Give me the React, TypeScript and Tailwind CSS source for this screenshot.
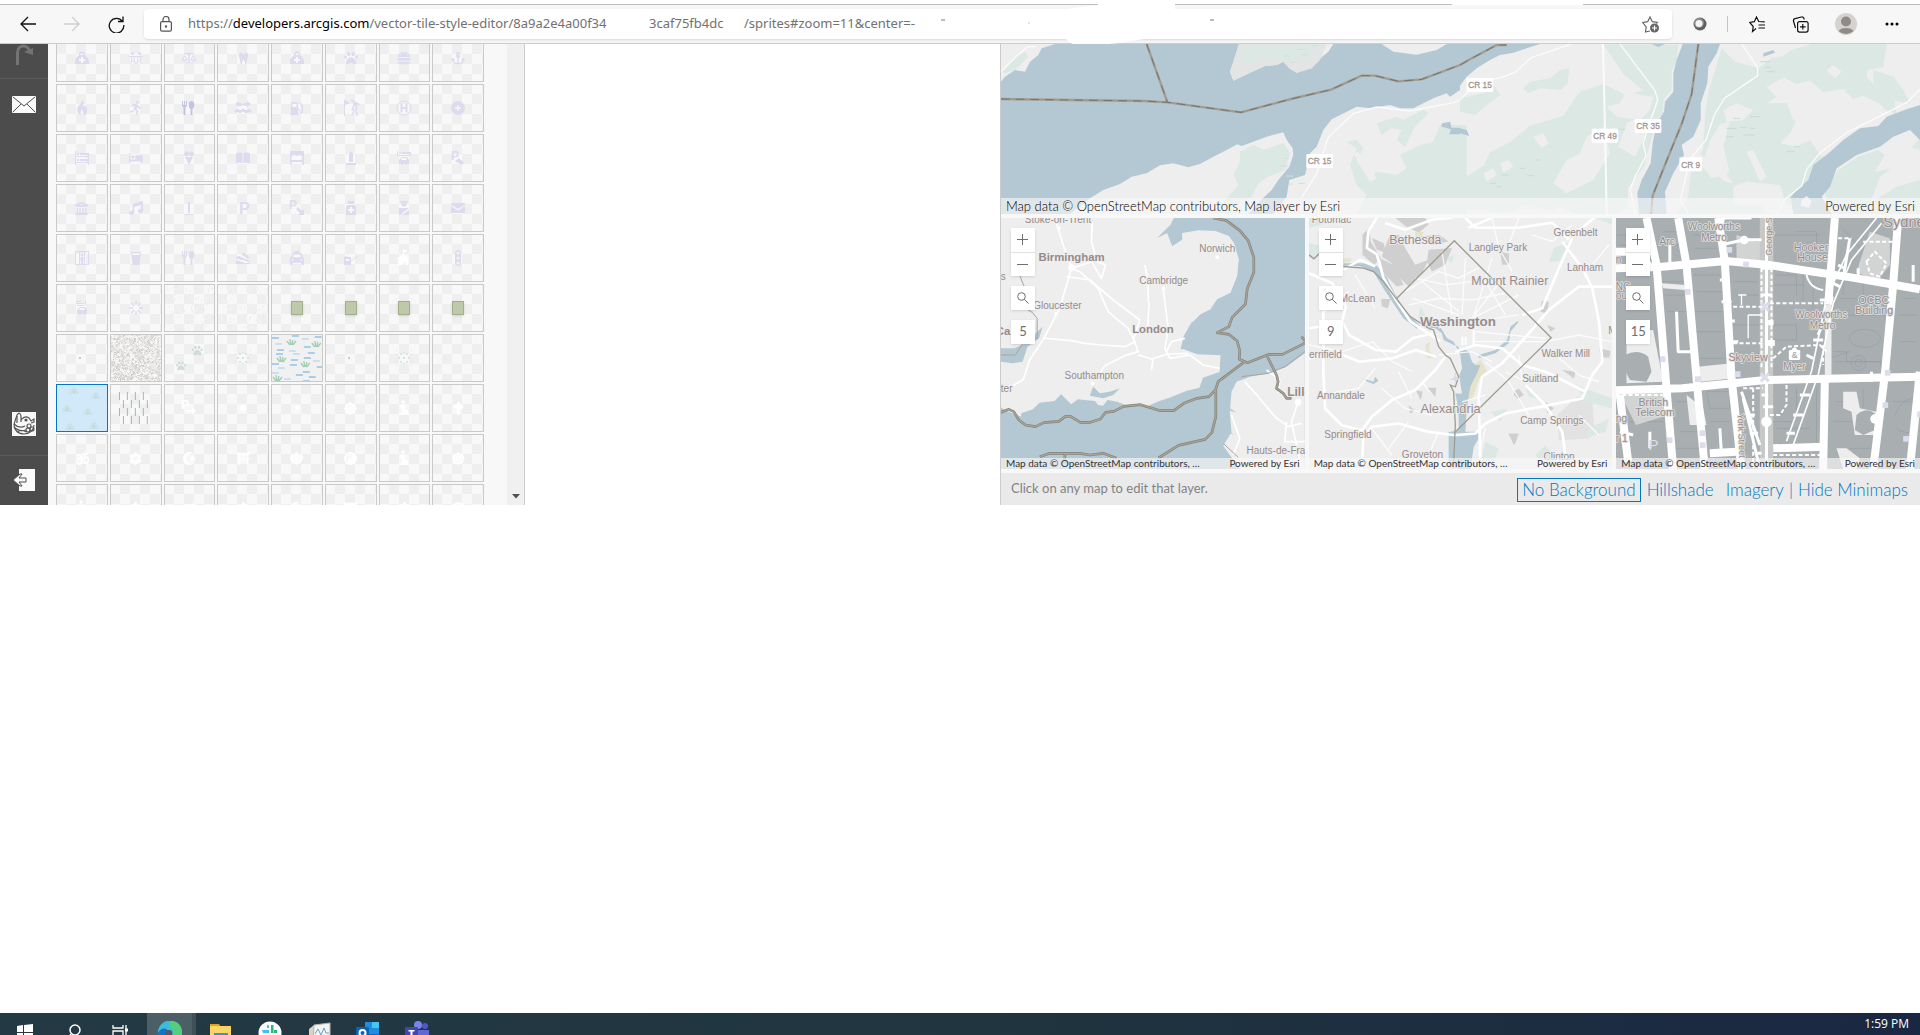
import type { ReactNode } from "react";
import {
  FaAnchor,
  FaBed,
  FaBookOpen,
  FaBuildingColumns,
  FaBurger,
  FaCirclePlus,
  FaCross,
  FaDharmachakra,
  FaFire,
  FaGasPump,
  FaKhanda,
  FaMusic,
  FaOm,
  FaPaw,
  FaPersonRunning,
  FaScaleBalanced,
  FaStarAndCrescent,
  FaStarOfDavid,
  FaTaxi,
  FaTooth,
  FaToriiGate,
  FaYinYang,
} from "react-icons/fa6";

// Small deterministic generator so the texture swatches stay the same between renders
const makeRandom = (seed: number) => {
  let s = seed;
  return () => {
    s = (s * 16807) % 2147483647;
    return s / 2147483647;
  };
};

const Glyph = ({ children }: { children: ReactNode }) => (
  <svg viewBox="0 0 14 14" className="h-[14px] w-[14px] overflow-visible" fill="currentColor">
    {children}
  </svg>
);

const Letter = ({ size = 15, x = 3, y = 12 }: { size?: number; x?: number; y?: number }) => (
  <text x={x} y={y} fontSize={size} fontWeight="700" fontFamily="Liberation Sans, sans-serif">
    P
  </text>
);

const MedKit = () => (
  <Glyph>
    <path
      fillRule="evenodd"
      d="M4 4V3.500a3 3 0 0 1 6 0V4l3 3 1 3v3H0v-3l1-3zM5.500 4h3V3.500a1.500 1.500 0 0 0-3 0zM6 6v2H4v2h2v2h2v-2h2V8H8V6z"
    />
  </Glyph>
);

const Seesaw = () => (
  <Glyph>
    <circle cx="3.500" cy="2.500" r="1.500" />
    <circle cx="10.500" cy="2.500" r="1.500" />
    <path d="M0 5h14v1H0z" />
    <path d="M3 5 2 13M5 6l1 7M11 5l1 8M9 6l-1 7M3 9l4 4M11 9l-4 4" stroke="currentColor" fill="none" />
  </Glyph>
);

const Flame = () => (
  <Glyph>
    <path
      fillRule="evenodd"
      d="M7-1q3 2 1 6 1 1 2-1 3 4 2 7-1 3-4 3 1-3-1-6-2 3-1 6-4-1-4-5 0-3 3-6 2-2 2-4z"
    />
  </Glyph>
);

const Swim = () => (
  <Glyph>
    <path d="m-1 3 4-3v2h2l2 1 2-1h2V0l4 3-4 3V5H9L7 4 5 5H3v1z" />
    <path d="m-1 11 2.500-2L4 11l3-2 3 2 2.500-2 2.500 2" stroke="currentColor" strokeWidth="2.500" fill="none" />
  </Glyph>
);

const Golf = () => (
  <Glyph>
    <path d="M0-1h1v16H0zM1-1l5 3-5 2z" />
    <path d="m7-1 7 4-5 0M10 4l-2 5M12 4v5l1 6M9 8l1 2-2 4" stroke="currentColor" strokeWidth="1.500" fill="none" />
    <circle cx="11" cy="3" r="1.500" />
  </Glyph>
);

const Heliport = () => (
  <Glyph>
    <circle cx="7" cy="7" r="7" fill="none" stroke="currentColor" />
    <path d="M3.500 2.500h2v3.500h3V2.500h2v9h-2V8h-3v3.500h-2z" />
  </Glyph>
);

const Fork = () => (
  <Glyph>
    <path d="M0 0h1v4h1V0h1v4h1V0h1v5L3.500 6.500V14h-2V6.500L0 5z" />
    <ellipse cx="9.500" cy="4" rx="2.800" ry="4" />
    <path d="M8.500 7h2v7h-2z" />
  </Glyph>
);

const Bunk = () => (
  <Glyph>
    <path d="M0 0h1v14H0zM13 2h1v12h-1zM0 5h14v1H0zM0 11h14v1H0zM5 2h8v2H5zM5 8h8v2H5z" />
    <circle cx="3" cy="3" r="1.300" />
    <circle cx="3" cy="9" r="1.300" />
  </Glyph>
);

const Cone = () => (
  <Glyph>
    <circle cx="4.500" cy="3" r="2.500" />
    <circle cx="9.500" cy="3" r="2.500" />
    <path d="M3 6h8L7 14z" />
  </Glyph>
);

const Stall = () => (
  <Glyph>
    <path d="M0 0h14v4l-2 1-2-1-3 1-3-1-2 1-2-1z" />
    <path d="M0 4h1.500v10H0zM12.500 4H14v10h-1.500zM0 9h14v2H0z" />
  </Glyph>
);

const Obelisk = ({ thin }: { thin?: boolean }) => (
  <Glyph>
    {thin ? <path d="M6 2l1-2 1 2v10H6zM3 13h8v1H3z" /> : <path d="M5 3l2-3 2 3v8H5zM2 12h10v2H2z" />}
  </Glyph>
);

const Car = ({ top }: { top: ReactNode }) => (
  <Glyph>
    {top}
    <path d="m4 7 1-1h5l1 1 1 2v4h-2v1H9v-1H6v1H4v-1H2V9zM5 7 4 9h6L9 7z" fillRule="evenodd" />
  </Glyph>
);

const Bottle = () => (
  <Glyph>
    <path fillRule="evenodd" d="M4 0h6v3H4zM3 4h8l1 2v8H2V6zM6 6v2H4v2h2v2h2v-2h2V8H8V6z" />
  </Glyph>
);

const Police = () => (
  <Glyph>
    <path d="M3 0h8l-1 2H4zM4 2.500h6c0 4-6 4-6 0zM2 7h10L3 14H2zM12 9v5H5z" />
  </Glyph>
);

const Mail = () => (
  <Glyph>
    <path d="M0 2h14v1.500L7 8 0 3.500zM0 5l7 4.500L14 5v7H0z" />
  </Glyph>
);

const Elevator = () => (
  <Glyph>
    <path fillRule="evenodd" d="M0 0h14v14H0zM1 1v12h3V1zM5 1v12h4V1zM10 1v12h3V1z" />
    <circle cx="7" cy="4" r="1.500" />
    <path d="M5.500 6h3v4H8v3H6v-3h-.500z" />
  </Glyph>
);

const Cup = () => (
  <Glyph>
    <path fillRule="evenodd" d="M2 1h10l-1.500 13h-7zM3 2l.200 2h7.600l.200-2z" />
  </Glyph>
);

const Shoe = () => (
  <Glyph>
    <path d="m0 6 3-1 11 5v1L0 7.500zM0 9l9 3h5v1H0zM5 3l3-1 1 1 4 2-1 3z" />
  </Glyph>
);

const Watering = () => (
  <Glyph>
    <path fillRule="evenodd" d="M0 6h7v8H0zM1.500 8v2h4V8z" />
    <path d="m7 10 5-4 2 0M0 6h3" stroke="currentColor" fill="none" />
  </Glyph>
);

const School = () => (
  <Glyph>
    <path d="M6-1h4v2H7v3l5 3v1h-1v6H9v-3H6v3H1V8H0V7l6-3z" />
  </Glyph>
);

const Lights = () => (
  <Glyph>
    <rect x="4" y="-1" width="6" height="16" rx="3" />
    <g fill="#f3f3f6">
      <circle cx="7" cy="2" r="1.600" />
      <circle cx="7" cy="7" r="1.600" />
      <circle cx="7" cy="12" r="1.600" />
    </g>
  </Glyph>
);

const Burst = () => (
  <Glyph>
    <path d="M7 0v4M7 10v4M0 7h4M10 7h4M2.500 2l2.500 3M11.500 2 9 5M2.500 12 5 9M11.500 12 9 9" stroke="currentColor" strokeWidth="1.500" />
  </Glyph>
);

const GreenSquare = () => <span className="h-[14px] w-[12px] border border-[#a3af8a] bg-[#bec8aa] shadow-sm" />;

const Kneel = () => (
  <Glyph>
    <circle cx="6" cy="1" r="1.700" />
    <path d="M4 4h4v5h3v3h1v2H2v-2h3V7L2 6z" />
  </Glyph>
);

const DotRing = () => (
  <svg viewBox="0 0 16 16" className="h-4 w-4 text-[#d9e5e0]" fill="currentColor">
    <path d="M4 3h2v2H4zM10 3h2v2h-2zM7 7h2v2H7zM2 7h2v2H2zM12 7h2v2h-2zM4 11h2v2H4zM10 11h2v2h-2zM7 13h2v1H7zM7 2h2v1H7zM0 0h1v1H0zM15 0h1v1h-1zM0 15h1v1H0zM15 15h1v1h-1zM0 4h1v1H0zM15 4h1v1h-1zM0 11h1v1H0zM15 11h1v1h-1z" />
  </svg>
);

const Texture = ({ seed, count, colors, long }: { seed: number; count: number; colors: string[]; long?: boolean }) => {
  const random = makeRandom(seed);
  const marks = Array.from({ length: count }, (_, i) => {
    const x = Math.floor(random() * 50);
    const y = Math.floor(random() * 46);
    const dx = long ? Math.floor(random() * 5) - 2 : 1;
    const dy = long ? Math.floor(random() * 5) - 2 : 0;
    return <path key={i} d={`M${x} ${y}l${dx} ${dy}`} stroke={colors[i % colors.length]} />;
  });
  return (
    <svg viewBox="0 0 50 46" className="h-full w-full" preserveAspectRatio="none">
      {marks}
    </svg>
  );
};

const Marsh = () => {
  const reeds = [[15, 10], [40, 12], [5, 27], [29, 32], [1, 46]];
  const water = [
    [20, 1], [30, 4], [43, 2], [0, 3], [3, 9], [32, 12], [5, 15], [17, 16], [36, 18], [4, 19], [21, 19],
    [32, 23], [19, 25], [41, 26], [0, 29], [18, 30], [6, 33], [45, 32], [31, 37], [0, 38], [24, 40], [37, 42], [12, 44], [31, 46],
  ];
  return (
    <svg viewBox="0 0 50 46" className="h-full w-full bg-[#f1f1f1]" preserveAspectRatio="none">
      {water.map(([x, y], i) => (
        <path key={i} d={`M${x} ${y}h7`} stroke={i % 3 === 1 ? "#a9cdea" : "#63aae0"} />
      ))}
      {reeds.map(([x, y]) => (
        <path key={x} d={`M${x} ${y - 4}l3 4M${x + 3} ${y - 6}l1 6M${x + 6} ${y - 5}l-1 5M${x + 9} ${y - 4}l-3 4`} stroke="#a4cdb5" strokeWidth="1.400" />
      ))}
    </svg>
  );
};

const Tufts = () => (
  <svg viewBox="0 0 50 46" className="h-full w-full" preserveAspectRatio="none" fill="none" stroke="#c2d8d6" strokeWidth=".8">
    {[[17, 8], [39, 13], [10, 26], [31, 29], [13, 44], [37, 43]].map(([x, y]) => (
      <path key={x} d={`M${x - 5} ${y}h10M${x - 4} ${y - 3}l4 3 4-3M${x - 2} ${y - 5}l2 5 2-5M${x} ${y - 6}v6`} />
    ))}
  </svg>
);

const Rushes = () => (
  <svg viewBox="0 0 50 46" className="h-full w-full" preserveAspectRatio="none" stroke="#9cbdb0">
    {[7, 15, 23, 31].map((y, row) =>
      [8, 16, 24, 32].map((x) => <path key={`${x}-${y}`} d={`M${x + (row % 2) * 4 + 0.5} ${y}v8`} />)
    )}
  </svg>
);

const Paws = () => (
  <svg viewBox="0 0 50 46" className="h-full w-full text-[#d0dcd8]">
    <FaPaw x="27" y="10" size={11} />
    <FaPaw x="11" y="26" size={10} />
  </svg>
);

const Speck = () => <span className="mr-1 h-[2px] w-[2px] bg-[#b5d2c6]" />;

const bedTop = (
  <g>
    <path d="M0 0h1v5H0zM13 1h1v4h-1zM0 4h14v1H0zM5 1h8v2H5z" />
    <circle cx="3" cy="2" r="1" />
  </g>
);

type Sprite = { name: string; art?: ReactNode; tone?: "dark" | "white" };

const sprites: Sprite[] = [
  { name: "hospital bag", art: <MedKit /> },
  { name: "playground", art: <Seesaw /> },
  { name: "courthouse", art: <FaScaleBalanced size={14} /> },
  { name: "dentist", art: <FaTooth size={13} /> },
  { name: "doctor", art: <MedKit /> },
  { name: "veterinary", art: <FaPaw size={14} /> },
  { name: "fast food", art: <FaBurger size={14} /> },
  { name: "harbor", art: <FaAnchor size={14} /> },
  { name: "fire station", art: <Flame /> },
  { name: "running", art: <FaPersonRunning size={14} /> },
  { name: "restaurant", art: <Fork />, tone: "dark" },
  { name: "swimming", art: <Swim /> },
  { name: "fuel", art: <FaGasPump size={13} /> },
  { name: "golf", art: <Golf /> },
  { name: "heliport", art: <Heliport /> },
  { name: "hospital", art: <FaCirclePlus size={14} /> },
  { name: "hostel", art: <Bunk /> },
  { name: "hotel", art: <FaBed size={14} /> },
  { name: "ice cream", art: <Cone /> },
  { name: "library", art: <FaBookOpen size={14} /> },
  { name: "market", art: <Stall /> },
  { name: "monument", art: <Obelisk /> },
  { name: "motel", art: <Car top={bedTop} /> },
  { name: "parking ride", art: <Glyph><Letter size={12} x={0} y={9} /><path d="m4 10 4-3 5 5-2 2z" /></Glyph> },
  { name: "museum", art: <FaBuildingColumns size={13} /> },
  { name: "music", art: <FaMusic size={14} /> },
  { name: "obelisk", art: <Obelisk thin /> },
  { name: "parking", art: <Glyph><Letter size={16} y={13} /></Glyph> },
  { name: "parking exit", art: <Glyph><Letter size={12} x={-1} y={8} /><path d="M8 6l4 4 2-2v6H8l2-2-4-4z" /></Glyph> },
  { name: "pharmacy", art: <Bottle /> },
  { name: "police", art: <Police /> },
  { name: "post office", art: <Mail /> },
  { name: "elevator", art: <Elevator /> },
  { name: "cafe", art: <Cup /> },
  { name: "food court", art: <Fork /> },
  { name: "shoes", art: <Shoe /> },
  { name: "taxi", art: <FaTaxi size={14} /> },
  { name: "garden center", art: <Watering /> },
  { name: "school", art: <School />, tone: "white" },
  { name: "traffic signal", art: <Lights /> },
  { name: "car wash", art: <Car top={<path d="M1 0h5v1H1zM1 2h8v1H1zM2 4h7v1H2zM10 0h1v4h-1z" />} /> },
  { name: "fireworks", art: <Burst /> },
  { name: "dots", art: <Texture seed={17} count={230} colors={["#e3e3ee", "#ededf2", "#fafafa"]} /> },
  { name: "light dots", art: <Texture seed={71} count={230} colors={["#e9e9eb", "#fafafa"]} /> },
  { name: "park 1", art: <GreenSquare /> },
  { name: "park 2", art: <GreenSquare /> },
  { name: "park 3", art: <GreenSquare /> },
  { name: "park 4", art: <GreenSquare /> },
  { name: "dot", art: <Speck /> },
  { name: "scrub", art: <Texture seed={29} count={1300} colors={["#dedbd8", "#c9c7c3", "#f4f4f3", "#dddad6"]} long /> },
  { name: "paws", art: <Paws /> },
  { name: "dot ring", art: <DotRing /> },
  { name: "marsh", art: <Marsh /> },
  { name: "small dot", art: <Speck /> },
  { name: "dot ring 2", art: <DotRing /> },
  { name: "grain", art: <Texture seed={43} count={80} colors={["#f1f1f1", "#fafafa"]} /> },
  { name: "tufts", art: <Tufts /> },
  { name: "rushes", art: <Rushes /> },
  { name: "parking right", art: <Glyph><Letter size={12} x={-1} y={8} /><path d="M4 9h6V6l4 4-4 4v-3H4z" /></Glyph>, tone: "white" },
  { name: "large circle", art: <Glyph><circle cx="7" cy="7" r="3" /></Glyph>, tone: "white" },
  { name: "small circle", art: <Glyph><circle cx="7" cy="7" r="2" /></Glyph>, tone: "white" },
  { name: "buddhist", art: <FaDharmachakra size={13} />, tone: "white" },
  { name: "shrine", art: <Kneel />, tone: "white" },
  { name: "church", art: <FaCross size={13} />, tone: "white" },
  { name: "hindu", art: <FaOm size={14} />, tone: "white" },
  { name: "jewish", art: <FaStarOfDavid size={13} />, tone: "white" },
  { name: "muslim", art: <FaStarAndCrescent size={13} />, tone: "white" },
  { name: "shinto", art: <FaToriiGate size={13} />, tone: "white" },
  { name: "sikh", art: <FaKhanda size={13} />, tone: "white" },
  { name: "taoist", art: <FaYinYang size={13} />, tone: "white" },
  { name: "confucian", art: <Kneel />, tone: "white" },
  { name: "wheel", art: <FaDharmachakra size={13} />, tone: "white" },
  { name: "shrine 2", art: <Kneel />, tone: "white" },
  { name: "church 2", art: <FaCross size={13} />, tone: "white" },
  { name: "hindu 2", art: <FaOm size={13} />, tone: "white" },
  { name: "jewish 2", art: <FaStarOfDavid size={13} />, tone: "white" },
  { name: "muslim 2", art: <FaStarAndCrescent size={13} />, tone: "white" },
  { name: "shinto 2", art: <FaToriiGate size={13} />, tone: "white" },
  { name: "sikh 2", art: <FaKhanda size={13} />, tone: "white" },
  { name: "taoist 2", art: <FaYinYang size={13} />, tone: "white" },
];

const tones = {
  normal: "text-[#dcdcee]",
  dark: "text-[#c3c3e3]",
  white: "text-white",
};

const SpriteCell = ({ sprite }: { sprite: Sprite }) => {
  const selected = sprite.name === "tufts";
  return (
    <button
      aria-label={sprite.name}
      className={`flex h-12 items-center justify-center overflow-hidden border ${tones[sprite.tone ?? "normal"]} ${
        selected
          ? "border-[#0079c1] bg-[#d2e9f9]"
          : "border-[#cacaca] bg-[repeating-conic-gradient(#efefef_0_25%,#f8f8f8_0_50%)] bg-[length:20px_20px] bg-[position:-1px_-1px]"
      }`}
    >
      {sprite.art}
    </button>
  );
};

const BrowserBar = () => (
  <header className="relative flex h-11 flex-col border-b border-[#cccccc] bg-[#f7f7f7]">
    <div className="flex h-[5px] shrink-0 bg-white">
      <div className="w-[1098px] border-b border-[#bdbdbd]" />
      <div className="w-[76px]" />
      <div className="w-[278px] border-b border-[#bdbdbd]" />
      <div className="w-[131px]" />
      <div className="grow border-b border-[#bdbdbd]" />
    </div>
    <div className="flex grow items-center pr-[21px] text-[#101010]">
      <button aria-label="Back" className="ml-5">
        <svg width="16" height="16" viewBox="0 0 16 16" fill="none" stroke="currentColor" strokeWidth="1.300">
          <path d="M16 8H1M8 1 1 8l7 7" />
        </svg>
      </button>
      <button aria-label="Forward" className="ml-7 text-[#cfcfcf]">
        <svg width="16" height="16" viewBox="0 0 16 16" fill="none" stroke="currentColor" strokeWidth="1.300">
          <path d="M0 8h15M8 1l7 7-7 7" />
        </svg>
      </button>
      <button aria-label="Refresh" className="ml-7">
        <svg width="17" height="17" viewBox="0 0 17 17" fill="none" stroke="currentColor" strokeWidth="1.300">
          <path d="M14.500 5.500A7.300 7.300 0 1 0 15.800 9M15 .500v5h-5" />
        </svg>
      </button>
      <div className="ml-[19px] flex h-[30px] min-w-0 grow items-center rounded bg-white pr-3 pl-4 font-['Noto_Sans','Open_Sans',sans-serif] text-[13px] text-[#717171] shadow-sm">
        <svg width="12" height="16" viewBox="0 0 12 16" fill="none" stroke="#555" strokeWidth="1.200">
          <rect x=".6" y="5.600" width="10.800" height="9.600" rx="1.500" />
          <path d="M3 5.500V3.500a3 3 0 0 1 6 0v2" />
          <circle cx="6" cy="10.500" r=".6" fill="#555" />
        </svg>
        <div className="ml-4 flex w-[860px] shrink-0 whitespace-nowrap">
          <span className="w-[461px]">
            https://<span className="text-black">developers.arcgis.com</span>/vector-tile-style-editor/8a9a2e4a00f34
          </span>
          <span className="w-[95px]">3caf75fb4dc</span>
          <span className="w-[198px]">/sprites#zoom=11&amp;center=-</span>
        </div>
        <button aria-label="Add to favorites" className="ml-auto">
          <svg width="18" height="17" viewBox="0 0 18 17" fill="none" stroke="#666" strokeWidth="1.200">
            <path d="M8 15 3.500 16l.700-5L.700 6.500l5-.800L8 1l2.300 4.700 5 .800-1 1" />
            <circle cx="12.500" cy="12" r="4.500" fill="#666" stroke="none" />
            <path d="M12.500 9.500v5M10 12h5" stroke="#fff" />
          </svg>
        </button>
      </div>
      <button aria-label="Extension" className="ml-[21px]">
        <svg width="14" height="14" viewBox="0 0 14 14">
          <circle cx="7" cy="7" r="6.500" fill="#5f5f5f" />
          <circle cx="6" cy="6" r="5" fill="#8e8e8e" />
          <circle cx="6" cy="6.500" r="3.500" fill="#f4f4f4" />
        </svg>
      </button>
      <div className="ml-5 h-4 w-px bg-[#c4c4c4]" />
      <button aria-label="Favorites" className="ml-[21px]">
        <svg width="17" height="17" viewBox="0 0 17 17" fill="none" stroke="currentColor" strokeWidth="1.200">
          <path d="m7 12.500-3.500 3 .700-5L.700 6.500l4.600-.800L7.500 1l2.200 4.500 6 .300M9.500 9H16M9.500 12H16" />
        </svg>
      </button>
      <button aria-label="Collections" className="ml-[26px]">
        <svg width="17" height="17" viewBox="0 0 17 17" fill="none" stroke="currentColor" strokeWidth="1.200">
          <rect x="5.600" y="5.600" width="10.500" height="10.500" rx="2" />
          <path d="M10.800 8v5.600M8 10.800h5.600M3.500 12 1.500 5A2 2 0 0 1 3 2.700L9.500 1A2 2 0 0 1 12 2.500l.3 1" />
        </svg>
      </button>
      <button aria-label="Profile" className="ml-[26px]">
        <svg width="22" height="22" viewBox="0 0 22 22">
          <circle cx="11" cy="11" r="11" fill="#d5d3d0" />
          <circle cx="11" cy="8.500" r="5" fill="#918b86" />
          <path d="M3.500 18a8 4.500 0 0 1 15 0A11 11 0 0 1 3.500 18z" fill="#918b86" />
        </svg>
      </button>
      <button aria-label="Settings and more" className="ml-7">
        <svg width="14" height="4" viewBox="0 0 14 4">
          <circle cx="2" cy="2" r="1.500" />
          <circle cx="7" cy="2" r="1.500" />
          <circle cx="12" cy="2" r="1.500" />
        </svg>
      </button>
    </div>
    <svg className="absolute top-0 left-[930px] h-[46px] w-[300px]" viewBox="930 0 300 46" aria-hidden="true">
      <path d="M1058 10 1098 5V2h77v7l-60 3zM1065 38h85l-30 5-35 3q-16-1-20-8z" fill="#fff" />
      <path d="M941 20h4M1210 20h4" stroke="#777" />
      <path d="M1029 22v2" stroke="#ccc" />
    </svg>
  </header>
);

const SideRail = () => (
  <nav className="flex w-12 shrink-0 flex-col items-center bg-[#4c4c4c]">
    <button aria-label="Redo" className="h-[35px] w-full border-b border-[#5c5c5c] pl-4">
      <svg width="18" height="34" viewBox="0 0 18 34" fill="none">
        <path d="M1.500 21V9c0-5 3-7 6-7s5 2 6 5" stroke="#747474" strokeWidth="3" />
        <path d="m8 8 9-4v7z" fill="#747474" />
      </svg>
    </button>
    <button aria-label="Feedback" className="mt-[17px]">
      <svg width="24" height="17" viewBox="0 0 24 17">
        <rect width="24" height="17" rx="1" fill="#fafafa" />
        <path d="m1 1 11 9 11-9M1 16l8-8M23 16l-8-8" stroke="#4c4c4c" fill="none" />
      </svg>
    </button>
    <button aria-label="Sprites" className="mt-auto">
      <svg width="24" height="24" viewBox="0 0 24 24" fill="none" stroke="#555" strokeWidth="1.200">
        <rect width="24" height="24" fill="#f8f8f8" stroke="none" />
        <path d="M3 9c-3 8 3 13 9 13s10-4 10-9M3 9l2-6q3-4 4 1v6M9 8q4-5 8-2l2 3 3-2v3l-3 1" />
        <path d="M2 12q5 5 11 2M2 15q5 5 12 3M5 20q5-3 9 0M5 4v7" />
        <circle cx="14" cy="8" r="1" fill="#444" />
        <circle cx="17" cy="14" r="2" />
        <circle cx="20" cy="17" r="2" />
        <circle cx="16" cy="18" r="2" />
      </svg>
    </button>
    <div className="mt-[19px] w-full border-t border-[#5c5c5c]" />
    <button aria-label="Exit" className="mt-[13px] mb-[14px]">
      <svg width="22" height="22" viewBox="0 0 22 22">
        <path d="M6 0h16v22H6z" fill="#fafafa" />
        <path d="m0 11 7-6h2L6 9h7v4H6l3 4H7z" fill="#fafafa" stroke="#4c4c4c" strokeWidth="1" />
      </svg>
    </button>
  </nav>
);

const SpritePanel = () => (
  <section className="flex w-[477px] shrink-0 border-r border-[#cccccc] bg-[#f8f8f8]">
    <div className="h-full grow overflow-hidden pl-2">
      <div className="-mt-[10px] grid w-[428px] grid-cols-8 gap-0.5">
        {sprites.map((sprite) => (
          <SpriteCell key={sprite.name} sprite={sprite} />
        ))}
      </div>
    </div>
    <div className="flex w-[17px] items-end justify-center bg-[#f0f0f0] pb-1.5">
      <svg width="8" height="5" viewBox="0 0 8 5">
        <path d="M0 0h8L4 4.500z" fill="#505050" />
      </svg>
    </div>
  </section>
);

type Label = { text: string; x: number; y: number; size: number; bold?: boolean; turn?: number };

const MapLabels = ({ labels, halo = "#eeeeee" }: { labels: Label[]; halo?: string }) => (
  <g fill="#968b8a" stroke={halo} strokeWidth="5" strokeLinejoin="round" paintOrder="stroke" fontFamily="Liberation Sans, Arial, sans-serif">
    {labels.map((l, i) => (
      <text
        key={i}
        x={l.x}
        y={l.y}
        fontSize={l.size}
        fontWeight={l.bold ? 700 : 400}
        transform={l.turn ? `rotate(${l.turn} ${l.x} ${l.y})` : undefined}
      >
        {l.text}
      </text>
    ))}
  </g>
);

const Shield = ({ x, y, w = 80, text }: { x: number; y: number; w?: number; text: string }) => (
  <g fontFamily="Liberation Sans, Arial, sans-serif">
    <rect x={x} y={y} width={w} height="42" rx="4" fill="#fff" />
    <text x={x + w / 2} y={y + 31} fontSize="25" textAnchor="middle" fill="#9f9492" stroke="#9f9492" strokeWidth=".8">
      {text}
    </text>
  </g>
);

const Border = ({ d }: { d: string }) => (
  <g fill="none" strokeLinejoin="round">
    <path d={d} stroke="#a19d92" strokeWidth="7" />
    <path d={d} stroke="#75736a" strokeWidth="3" strokeDasharray="26 18" />
  </g>
);

const MainMap = () => (
  <svg viewBox="3 12 2757 510" className="block h-[170px] w-full bg-[#eeeeee]" preserveAspectRatio="xMidYMid slice">
    <g fill="#dce8e4">
      <path d="m720 335 40-20 30 15 60-20 20 30-15 50-50 20-30 20-20 40-30 10-30 40h-50l40-50 30-35-15-30 20-40zM1130 250l60-20 20 10 60-30 15 10-40 40-30 60-25-20 15-30-30-5-30 20zM1040 305l30-5 20 25-20 40 40 50 20-20 60 10 30-20-20-40 60-30 40-10 20-50h80v270h-330l30-60-30-30-20-60 20-50z" />
      <path d="m1270 520 40-80-90-20 10-40 70-10 80-50v200z" />
    </g>
    <path d="m1060 340 15-5 55 80-20 12z" fill="#eeeeee" />
    <path
      fill="#b4c8d3"
      d="M165 12 125 25l-10 20-25 20-15 30-30-5-30 20-12 15v397h207l60-47 40-25 50-18 35-22 45-10 40-24 40-6 45 12 35-10 40-22 40-20 32-17 13 5 35-13 40-15 50-13 10 23 18 25 2 20-12 35-33 40-20 30-30 28-40 44h75l40-52 8-50 47-15 15-65 20-20 20-50 25-32 45-23 30-15 40 5 60-10 30 10h40l60-30 40-15 10 10 30-20v-13l20-27 30-25 40-25 30-15 40-7 40-13 40-13h-280l-30 18-60 14-70-9-35-23h-145l-15 23-30 25-20 25-45 13-22-13-18-20-20 10-35 3-45 20-50 24-10-27 15-45 12-38z"
    />
    <path d="m35 60 40-25 10 15-40 40-30 10-8-5z" fill="#dce8e4" />
    <path d="M717 12h263l-20 48-25 25-45 13-22-13-18-20-20 10-35 3-45 20-50 24-10-27 15-45z" fill="#e3e5e5" />
    <path d="m735 20 220-8-25 35-90 15-60-10-20 20-40 0z" fill="#dce8e4" />
    <path d="M1325 250l25-5 5 18 25 0v20h-32l5-15-28-8z" fill="#b4c8d3" />
    <g transform="translate(1380 0)">
      <g fill="#dce8e4">
        <path d="m335 12 320 2-5 55-15 20 0 60-25 30-2 40-20 30-20 70-15 60-20 25-30 40v55l-30 23H350l-50-20-30 10-80-15-30 20-150-10 0-90 60-40 20-40 60-30 60-50 100-30 40-60 50-50 55-10 0-50-90-10zM190 145l20-20 60-10 30-25 28-5-5 45-20 20-60-5-40 15zM0 175l70-15 30-25 22 30-42 30-35 30-45-10z" />
        <path d="m785 25 40 40 70 20 40-30 30-5 30-20 60-18h160l15 40-10 60 30 30 50 20 10 60-30-10-20-20-50-25-30 10-30-30-60 10-40-35-40 10-40-20-50 30 30 30-50 30-40 30-80 20-30 50-20 60 60 60 30 10-20-30 20-20 70 60 20 40 0 60-60-10-80 40-60 15H630l15-60 40-60 10-90 35-50 5-100 10-70zM880 160l30 30 70 0 40 30-30 60-30 30 50 10 40-20 40 60-40 30-60 110-70-10-50-60-60-30-20-80 20-80z" />
        <path d="M1050 12h230l-10 70-60 10-90 30-60-40zM1240 90l60 20 30 40 20 40-60-10-50-50z" />
        <path d="m1090 450 45-60 60-40 60-20 20 15-30 50 50-10 85-90v227H1120zM840 400l160 0 120-70 30 20-100 60-30 70-180-30z" />
      </g>
      <g fill="#eeeeee">
        <path d="m330 12 100 0 60 90 60 50-60 10-60-30-60 20-30-40zM500 150l40 15 40 5-10 40-30 30-70-10-30-30 40-10zM320 360l40-20 20-50 50-30 20 80-50 80-80 40-40-30zM500 250l40-20 15 60-30 60-50-30zM180 235l20-15 20 10 40-12 10 20-50 10zM220 290l30-10 15 30-20 15zM120 370l25-10 15 20-30 18zM70 400l30-15 10 20-30 20zM1100 90l20-15 25 20-20 20zM860 335l20-5 40 80-20 15zM720 340l30 30 25 40-20 5-50-60z" />
        <path d="M790 210l40-20 50 20-30 30-50 5zM980 190l120-30 70 30-10 60-80 20-80-30zM820 440l40-15 100 10 20 60h-160z" />
        <path d="m1260 410 40-30 50-60 30 10v90l-70 20-80 50z" />
      </g>
      <g stroke="#c5dcd3" strokeWidth="3">
        <path d="M820 235h20M870 230h30M800 265h30M840 262h20M800 290h20M850 285h35M870 265h15M980 335h25M1000 320h20M90 430h20M125 405h20M110 440h15M180 385h15M225 360h15M205 407h15M470 268h25M900 65h30M915 82h20M920 95h25" />
      </g>
      <g fill="#b4c8d3">
        <path d="m668 12-18 48-10 40v55l-25 30-3 30-22 35-12 60-6 60-27 50-13 40 5 62h83l-5-67 25-55 32-55-7-30 35-25 22-50v-50l20-60 3-50 25-40 10-28zM1380 195l-40 13-60 22-25 28-55 7-50 35-50 45-40 30-15 45-35 30-18 22 8 50h115l-30-52 25-30 20-55 60-40 70-25 40-30 50-20 30 30zM0 265l20 5 8 18-28-8zM910 40l30-10 5 8-35 12zM575 12h40l-20 9z" />
      </g>
      <g fill="none" stroke="#fbfbfb" strokeWidth="4" strokeLinejoin="round">
        <path d="m429 12 7 300 4 210" strokeWidth="6" />
        <path d="m480 12 60 80 45 60 8 28-28 80-15 50 8 38-32 60-15 40 15 74M845 12l48 70v25l-100 68-30 50-25 75-50 60-15 70-12 50 25 42M1380 148l-40 40-100 50-80 40-80 60-40 50-15 50-50 40-25 44M335 12l-120 40-50 45-40 16-45 7M30 150 0 180l-20 8" />
      </g>
      <path d="m1025 480 15-12 15 15-8 20-25-5z" fill="#eee" />
    </g>
    <g fill="none" stroke="#fbfbfb" strokeWidth="4">
      <path d="m3 95 45-45 35-30h25M1360 188l-130 25-100-12-70 20-75 70-35 110-45 71" />
    </g>
    <Border d="m440 12 62 174M3 177l430 6 70 4 220 30 150-40 120-28 92-42h40l70 17 70-6 115-43 30-17 80-43h30" />
    <Border d="m2095 12-20 150-30 90-45 110-42 105-5 55" />
    <g stroke="#cfe0d9" strokeWidth="3">
      <path d="M840 378h25M860 408h20M895 430h20M865 432h12M850 355h15M890 28h25M935 18h20M850 48h20M905 45h20M870 66h22" />
    </g>
    <Shield x={919} y={342} text="CR 15" />
    <Shield x={1400} y={114} text="CR 15" />
    <Shield x={1775} y={266} text="CR 49" />
    <Shield x={1904} y={237} text="CR 35" />
    <Shield x={2038} y={352} w={68} text="CR 9" />
  </svg>
);

const LondonMap = () => (
  <svg viewBox="3 9 912 753" className="block h-full w-full bg-[#b4c8d3]" preserveAspectRatio="xMidYMid slice">
    <path
      fill="#eeeeee"
      d="M3 9h519l-10 20-40 40 30-15 15 40 30-20 0-20 50-8 50 2 40 15 15 20 15 50-5 50-20 50-40 20-20 30-30 15-30 30-20 35-10 40h10l40 15 70 3-3 50-50 17-10 30-40 10-50 20-30 10-35 15-60 0-30-12-40-8-30 5-50-5-20 15-30-30-20 20-45 5-20 20-35 12 0 10-50-20-25-20-35-5-35 10-25 12z"
    />
    <path d="M275 545l15-5 35 12-15 20-15-2zM695 530l15-30 40-15 60-10 50-20 55-40v347H720l-50-70 25-40-5-60z" fill="#eeeeee" />
    <path d="M3 400l40 0 35-15 50-50-10 35-35 25-15 45-30 5-35-5zM570 322l35 10-5 20-30-5 30 12-5 12 30-30-20-20zM555 370l50 30h70l-20-20-60-5-45 5 30 20-30-3zM625 270l30 15-15-25 18 22v-35l5 30 25-25-20 38zM280 515l20 20 30-5 30-10-20 20-30 10-40-8zM680 645l25 15-25-8zM690 580l20 12-18-4z" fill="#b4c8d3" />
    <g fill="none" stroke="#fff" strokeWidth="5" strokeLinejoin="round">
      <path d="m165 9 25 80 25 70-35 120-50 95-40 60-20 60-60 35M215 160l60-20 30 50 12-40-25-10-17-60 2-60M200 185l70 10 70 60 80 60-20 60M215 160l25 10 55 50 30 70 60 50 20 40-30 15-70-5-50-5-40-8-85-8M435 150l10 50 0 60M448 262l-5 80M490 220l15 120-10 60 15 30 60-10 40 30 50 10M405 380l10 30-40 12-60 30-25 40M415 420l40 12 50-15 60-2M460 430l-5 35M500 410l15-30 40-10" />
      <path d="m735 500 40 45 50 60 40 30 40-10M800 465l40 30-5 40M895 560l-20 60 30 140M695 600l25 70-20 50M860 620l-5 60 60 0" />
    </g>
    <g fill="none" stroke="#a9a59b" strokeWidth="3">
      <path d="M60 182l12 30-10 60 35 20 15 18v60l-40 10-25 40H3M670 685l45 42M725 485l80-10 50-20 60-45" />
    </g>
    {[
      "m640 9 40 8 40 30 25 30 17 50 0 45-20 50-5 45-40 40-10 28-35 18 35 5 25 20 8 30-2 25 25 10 65-25 40 0 60-30 55-35 10-30 10-15M905 365l10 12M735 440l-80 60-8 25-20 20-35 5-40 15-30 22-40 0-60-18-50 5-30 15-25 3-15 20-30 10h-30l-30-18h-15l-20 15-45 4-25 12-30-5-20-15-15-25-15-7-40 15-5 30-35 55M648 525v80l-12 48-20 20-80 18-60 38M800 420l30 60 5 20-5 20 20 15 10 15h15M120 725l30-10 90 0 30 5 40-5 40 15M195 715v30",
    ].map((d) => (
      <g key={d} fill="none" strokeLinejoin="round">
        <path d={d} stroke="#84827a" strokeWidth="8" />
        <path d={d} stroke="#a8a499" strokeWidth="4" />
      </g>
    ))}
    <g fill="#fff">
      <circle cx="215" cy="158" r="10" />
      <circle cx="178" cy="39" r="5" />
      <circle cx="652" cy="127" r="6" />
      <circle cx="491" cy="220" r="6" />
      <circle cx="169" cy="296" r="6" />
      <circle cx="895" cy="562" r="10" />
      <circle cx="278" cy="505" r="6" />
    </g>
    <MapLabels
      labels={[
        { text: "Stoke-on-Trent", x: 75, y: 24, size: 30 },
        { text: "Birmingham", x: 116, y: 137, size: 34, bold: true },
        { text: "Norwich", x: 598, y: 111, size: 30 },
        { text: "Cambridge", x: 418, y: 206, size: 30 },
        { text: "Gloucester", x: 100, y: 281, size: 30 },
        { text: "London", x: 397, y: 353, size: 34, bold: true },
        { text: "Ca", x: -12, y: 360, size: 34, bold: true },
        { text: "Southampton", x: 194, y: 492, size: 30 },
        { text: "ter", x: 3, y: 530, size: 30 },
        { text: "s", x: 3, y: 196, size: 30 },
        { text: "Lille", x: 862, y: 542, size: 36, bold: true },
        { text: "Hauts-de-France", x: 740, y: 716, size: 30 },
      ]}
    />
  </svg>
);

const WashingtonMap = () => (
  <svg viewBox="12 9 909 753" className="block h-full w-full bg-[#eeeeee]" preserveAspectRatio="xMidYMid slice">
    <g fill="#cfcfcf">
      <path d="m250 70 30-10 20 40 30 50 40-15-20 40-40 40-30-30-20-40-30-20zM370 105l70-5-20 50-40 20-15-30zM340 65l60-5 30 20-50 10zM270 9h90l10 20-30 25-40-20zM172 60l20-20 5 40 30 50-20 20-35-30zM200 70l35 15 10 30-30-10zM590 110l20 10v30l-20-10zM710 260l18 0-5 35-18-5zM725 330l25 10-15 10zM610 655l25 15-10 20zM630 525l20 10-10 15-15-10zM370 520l20 0-3 30zM335 530l15 10-5 10zM310 570l20 15-15 10zM770 465l40 5-5 20zM720 560l25 20-20 15zM230 250l20 15-10 15zM885 400l30 10-5 20z" />
      <path d="m225 130 40 20 30 60-20 5-40-40zM585 115h25v35l-20 0zM625 530l15-10 15 20-20 12zM608 655l32 0-12 32zM882 402l32 5-10 22-20-5zM332 525l20 5-5 25zM365 518l28 0-4 34zM228 252l28 0-8 28-18-6zM708 258l22 4-6 36-16-8z" />
    </g>
    <path d="m755 600 60-55 45 5 5 80-15 40-90 5z" fill="#e2e2e2" />
    <g fill="#dce8e4">
      <path d="m785 85 10 20-35 35-30 0 15-40zM12 9h60l-20 20-40 10zM12 85l40 10-10 30-30 5zM345 275l15 25-20 10zM425 130l20-10-5 25zM660 520l25 10 10 20-25-5zM555 590l50-10-20 40zM810 510l110 40v30l-80-20zM540 680l40 20-20 60h-40zM690 720l30-30 30 40-20 30zM850 640l60-30-10 40-60 20zM870 10h50v20z" />
    </g>
    <g fill="#e5e3cc">
      <path d="m360 390 15-10-5 25 20 25-25 0zM500 455l25-20 20 30-25 30-20 60-15 0zM105 130h35l-5 12h-30zM330 52l25 0-5 15h-20z" />
    </g>
    <g fill="#b4c8d3">
      <path d="m115 145 60 0 40 8 30 35 25 50 35 55 40 40-10 8-40-30-60-90-30-50-40-17-50-2zM350 335l40 5 20 15 5 20 30 15 15 5 0 15 15-10 15 10 10 30 10 10 15 0-10 25-20 40-10 60-5 75 40 0 0 20-15 25-15 100h-30l-5-95-20-20v-20l0-10 25-5v-40l-5-45-5-25h20l-5-30-3-25 8-20-5-40-20-40-20-10-30-50zM640 320l-25 30-5 35-40 30-50 15 0-10 50-15 35-30 10-40 20-15zM175 490l30 10 5-15 10 12-15 10-20-8zM430 650h70l-5 25-20 25v60h-45z" />
    </g>
    <g fill="none" stroke="#fff" strokeWidth="4" opacity=".8">
      <path d="m300 230 100-60 60 20 60-30M320 250l140 50M350 200l110 90M410 110l30 190M480 130l-10 170M560 130l-60 190M600 180l-100 130M640 240l-140 70M460 300l-60 40M500 320l140-20M510 350l210 20M500 380l220 0M540 200l60 100M330 190l90 20 80-10 90 10M310 270l90-20 100 5 100-20M560 9l20 90 40 70M640 9l-30 80M400 420l100-10 60 30M540 440l70 60 60 100M150 180l60 100M12 390l100 20 90-30 60 60 60 30M60 230l30 40M130 230l-70 60M210 460l-50 60-120 20M230 520l70 60 80 20M250 700l60-80M720 380l100-20 100 20M750 420l70 60 60 20M820 600l60 60M640 420l10 80M600 470l60 30M470 560l70-20M540 640l-20 80M400 650l-40 90M200 640l60 80M350 500l40 50M280 470l40 80M860 150l50-60M680 60l60 20 60-50" />
    </g>
    <g fill="none" stroke="#fff" strokeWidth="8" strokeLinejoin="round">
      <path d="M215 9l-25 40-5 50 30 20 20 70 40 70 40 60 90 60M115 165l50-30 45 20M12 430l90-15 60 25 100-10 70-25 60 20M55 230l0 240 5 110 50 50 60 15 30-40 60-50 70-30 60-60 30-40M12 340l60-10 40-10 20 40 80 45 60 5 50-40 60-15M770 80l60 80 30 60 20 100 10 120-30 40-30 70-100 20-130 25-60 30-30 30-60 5-80-10-90-25-80 10-25 30-5 90-10 25M920 215l-100 0-90 70-60 70-80 90-60 40-10 60 5 200M800 70l-40 90-50 120-60 20M800 65l70-60M480 9l30 30 130 0 100-15 50 50M450 410l60-20 80 10 60 50 70 20 120 60M660 510l60 60 50 80 15 110M12 175l70 30 40 70-10 40M240 25l60 20 80-30 60-6M560 9l-70 30" />
      <path d="M471 365v25M481 365v25" strokeWidth="6" />
      <path d="M505 345v45" strokeWidth="6" />
    </g>
    <path d="m370 340 15 5 15 50 20 25 15 10 25 55-10 30-15-5 10 20 5 100-5 110M12 120l15 12 15-15M115 155l60 5 30 10 30 30 45 60 35 45 55 35M275 250 447 78l290 290-285 280" fill="none" stroke="#9f9c93" strokeWidth="4" />
    <path d="m450 465 3 20 15 10-15 0-3 15-3-15h-15l15-8zM812 598l3 10 8 5-20 0 7-5z" fill="#d9d9ea" />
    <MapLabels
      labels={[
        { text: "Potomac", x: 20, y: 26, size: 30 },
        { text: "Bethesda", x: 252, y: 88, size: 37 },
        { text: "Greenbelt", x: 744, y: 64, size: 30 },
        { text: "Langley Park", x: 490, y: 109, size: 30 },
        { text: "Lanham", x: 784, y: 169, size: 30 },
        { text: "Mount Rainier", x: 498, y: 209, size: 37 },
        { text: "McLean", x: 104, y: 262, size: 30 },
        { text: "Washington", x: 344, y: 334, size: 40, bold: true },
        { text: "M", x: 908, y: 356, size: 30 },
        { text: "Walker Mill", x: 708, y: 427, size: 30 },
        { text: "errifield", x: 12, y: 430, size: 30 },
        { text: "Suitland", x: 650, y: 501, size: 30 },
        { text: "Annandale", x: 36, y: 553, size: 30 },
        { text: "Alexandria", x: 346, y: 593, size: 38 },
        { text: "Camp Springs", x: 644, y: 627, size: 30 },
        { text: "Springfield", x: 58, y: 669, size: 30 },
        { text: "Groveton", x: 290, y: 728, size: 30 },
        { text: "Clinton", x: 714, y: 733, size: 30 },
      ]}
    />
  </svg>
);

const SydneyMap = () => (
  <svg viewBox="18 9 912 753" className="block h-full w-full bg-[#a9afb1]" preserveAspectRatio="xMidYMid slice">
    <g fill="none" stroke="#929fa3" strokeWidth="2">
      <path d="M160 50h60M170 90h50M250 60h70M255 100h65M20 60h80M30 90h100M160 200h70M165 240h80M170 290h60M240 350h100M250 180h80M260 230h90M255 290h90M270 430h90M370 200h70M375 240h70M370 330h80M490 60h140M500 180h60v60M580 170v100M490 210h90M610 200v80M690 250h150M660 300h170M670 440h150M700 180v60M760 200v60M880 250h40M870 300h50M870 380h50M60 350h70M60 620h100M200 560h60M210 650h70M290 530h70v50h-60zM490 620h60M560 520v80M620 520v160M680 560h60M670 620h60M760 520v60M850 560h60M560 50h60v50M700 40l50 60M500 640h100M720 700h80M300 620h60M190 700h80M480 330h80v45h-80z" />
      <ellipse cx="765" cy="370" rx="47" ry="27" />
      <circle cx="746" cy="444" r="22" />
      <circle cx="746" cy="444" r="11" />
      <path d="M670 410h40v30h100l10 30M660 430l60-20M855 600q25-60 75-50M860 640q20 20 70 10" />
    </g>
    <g fill="#ededed">
      <path d="m50 350 80-5 30 155-110 5zM155 205l70 5v15l-65-5zM265 455l100-10 5 45-95 10zM700 530h40l10 50 50 10-5 70-60 0-10-70-25-10zM680 700l30 0 40 30-10 32h-40zM230 540l50 40 10 50h-50z" />
      <path d="M18 520h150l10 80-100 30-30-60zM380 60l60 20 30-20v80l-90-10zM780 50l60 20 0 80-40 50-60-30z" fill="#d2d3d3" />
    </g>
    <path d="M45 420q40-20 70 5l10 45-15 30-50-5-15-30zM740 600q30-25 55-5l0 50-35 15-25-15z" fill="#a9afb1" />
    <path d="M470 9v753" stroke="#c7c9c9" strokeWidth="40" />
    <g fill="none" stroke="#fff" strokeLinejoin="round">
      <path d="m110 9 30 140 30 370 20 243M205 9l25 140 30 340 25 273M325 9l20 130 20 350 30 273M865 9l-15 200-25 270-35 283M930 470l-30 292M645 500l-5 262M675 9l-20 260" strokeWidth="24" />
      <path d="M18 110h70l30 45M18 160l130-4 200-18 130 12 250 38 202 35M18 526l200-6 250-25 462-10M490 700l150-5M300 715l80-5M30 540l25 200" strokeWidth="24" />
      <path d="M655 270v210" strokeWidth="20" stroke="#ececec" />
      <path d="M470 9v753" strokeWidth="9" />
      <path d="m800 9-90 110-60 130-45 220-75 210M815 25l-90 110-55 130-45 215-75 210" strokeWidth="5" />
      <path d="m425 9-85 0-5 80 70-15h50M720 70l-20 120M180 90v60M200 290l5 120 40 0M910 150v50M120 650v50M330 640l5 80M400 550l50 210M395 530l55 160M30 650l40 10" strokeWidth="9" />
      <path d="M415 300v70M415 300h40M395 240v30M385 240h25" strokeWidth="4" />
      <path d="M480 265h160M370 275h100M370 385h110M490 430l40-35 100-5 20 20M430 520v240M455 160v300M485 160v300M530 510v60l-20 30h-30M685 70h40M760 80h100M770 140l25-30 35 35-20 40-30-10zM18 540h140M400 520h60M490 720h150M640 390v60" strokeWidth="6" strokeDasharray="12 7" />
      <path d="M330 195h30M335 260h30M345 318h30M365 380h20M455 160h30M455 240h30M460 575h30M455 540h20M685 150l20 10M660 200l30 15M650 240l20 10M640 320l-15 40M610 375h30M590 420l20 10M570 540h30M550 600h30M530 655h25M410 600h25M420 655h25M435 715h20M40 655v30M745 160v30M785 470v30M630 255h40" strokeWidth="9" />
      <path d="M590 180q10 40 50 45" strokeWidth="6" />
    </g>
    <g fill="#fff">
      <circle cx="403" cy="75" r="13" />
      <rect x="537" y="405" width="34" height="30" rx="4" />
      <path d="M545 405q9-16 18 0z" />
      <circle cx="470" cy="620" r="16" />
      <rect x="475" y="375" width="20" height="18" />
      <rect x="475" y="315" width="16" height="16" />
      <circle cx="795" cy="612" r="14" />
    </g>
    <text x="545" y="430" fontSize="26" fontWeight="700" fontFamily="Liberation Sans, sans-serif" fill="#a9afb1">&amp;</text>
    <g fill="#dcdcec">
      {[[350, 96], [400, 140], [225, 222], [150, 424], [375, 469], [255, 484], [825, 465], [818, 562], [880, 663], [171, 667], [269, 646], [270, 682], [922, 590]].map(([x, y]) => (
        <rect key={`${x}-${y}`} x={x} y={y} width="17" height="17" />
      ))}
      <path d="m453 263 24 24M477 263l-24 24M453 475l24 24M477 475l-24 24" stroke="#dcdcec" strokeWidth="9" />
      <text x="115" y="706" fontSize="46" fontFamily="Liberation Sans, sans-serif">P</text>
    </g>
    <MapLabels
      halo="#dfe0e0"
      labels={[
        { text: "Sydney", x: 820, y: 35, size: 44 },
        { text: "Woolworths", x: 234, y: 46, size: 30 },
        { text: "Metro", x: 274, y: 79, size: 30 },
        { text: "Arc", x: 148, y: 91, size: 32 },
        { text: "George Street", x: 488, y: 122, size: 27, turn: -90 },
        { text: "Hooker", x: 552, y: 108, size: 32 },
        { text: "House", x: 562, y: 138, size: 32 },
        { text: "n", x: 18, y: 144, size: 30 },
        { text: "NC", x: 18, y: 224, size: 30 },
        { text: "ou", x: 18, y: 252, size: 30 },
        { text: "OCBC", x: 746, y: 268, size: 32 },
        { text: "Building", x: 736, y: 298, size: 32 },
        { text: "Woolworths", x: 556, y: 308, size: 30 },
        { text: "Metro", x: 600, y: 341, size: 30 },
        { text: "Skyview", x: 356, y: 438, size: 32 },
        { text: "Myer", x: 520, y: 466, size: 30 },
        { text: "British", x: 86, y: 572, size: 32 },
        { text: "Telecom", x: 76, y: 602, size: 32 },
        { text: "ng", x: 18, y: 622, size: 30 },
        { text: "r 1", x: 18, y: 682, size: 30 },
        { text: "York Street", x: 384, y: 596, size: 27, turn: 88 },
      ]}
    />
  </svg>
);

const MapControls = ({ level }: { level: number }) => (
  <div className="absolute top-[10px] left-[10px] flex flex-col gap-[10px] text-[#6e6e6e]">
    <div className="flex flex-col gap-px bg-[#e0e0e0] shadow">
      <button aria-label="Zoom in" className="flex h-6 w-6 items-center justify-center bg-white">
        <svg width="12" height="12" viewBox="0 0 12 12" stroke="currentColor">
          <path d="M5.500 0v11M0 5.500h11" />
        </svg>
      </button>
      <button aria-label="Zoom out" className="flex h-[23px] w-6 items-center justify-center bg-white">
        <svg width="12" height="12" viewBox="0 0 12 12" stroke="currentColor">
          <path d="M0 5.500h11" />
        </svg>
      </button>
    </div>
    <button aria-label="Search" className="flex h-6 w-6 items-center justify-center bg-white shadow">
      <svg width="12" height="12" viewBox="0 0 12 12" stroke="currentColor" fill="none">
        <circle cx="4.500" cy="4.500" r="3.800" />
        <path d="m7.300 7.300 4.200 4.200" />
      </svg>
    </button>
    <div className="flex h-6 w-6 items-center justify-center bg-white text-[13px] shadow">{level}</div>
  </div>
);

const MiniMap = ({ level, children }: { level: number; children: ReactNode }) => (
  <div className="relative h-[251px] min-w-0 flex-1 overflow-hidden">
    {children}
    <MapControls level={level} />
    <div className="absolute inset-x-0 bottom-0 flex h-[11px] items-center justify-between bg-[#f8f8f8]/65 px-[5px] text-[10px] leading-[11px] text-[#323232]">
      <span>Map data © OpenStreetMap contributors, …</span>
      <span>Powered by Esri</span>
    </div>
  </div>
);

const MapPanel = () => (
  <main className="flex w-[920px] min-w-0 flex-col border-l border-[#cccccc] bg-[#f8f8f8] font-[Lato,sans-serif]">
    <div className="relative pb-1">
      <MainMap />
      <div className="absolute inset-x-0 bottom-0 flex h-5 items-start justify-between bg-[#f8f8f8]/65 px-[5px] text-[13px] leading-[17px] font-light text-black">
        <span>Map data © OpenStreetMap contributors, Map layer by Esri</span>
        <span>Powered by Esri</span>
      </div>
    </div>
    <div className="flex gap-1 pb-1">
      <MiniMap level={5}><LondonMap /></MiniMap>
      <MiniMap level={9}><WashingtonMap /></MiniMap>
      <MiniMap level={15}><SydneyMap /></MiniMap>
    </div>
    <footer className="flex h-8 items-center justify-between bg-[#eaeaea] pr-3 pl-[10px]">
      <span className="text-[13px] text-[#828282]">Click on any map to edit that layer.</span>
      <div className="flex items-center pt-0.5 text-[17px] leading-[22px] font-light text-[#0079c1]">
        <button className="border border-[#0079c1] px-1">No Background</button>
        <button className="ml-[6px]">Hillshade</button>
        <button className="ml-3">Imagery</button>
        <span className="mx-[5px]">|</span>
        <button>Hide Minimaps</button>
      </div>
    </footer>
  </main>
);

const tasks: { name: string; art: ReactNode }[] = [
  { name: "Start", art: <path d="m4 5 6-1v7H4zM11 4l9-1v8h-9zM4 12h6v7l-6-1zM11 12h9v8l-9-1z" fill="#fff" /> },
  {
    name: "Search",
    art: <g fill="none" stroke="#fff" strokeWidth="1.500"><circle cx="13" cy="9" r="5" /><path d="m9 13-5 6" /></g>,
  },
  {
    name: "Task View",
    art: <g fill="none" stroke="#fff" strokeWidth="1.300"><path d="M2 4v3h10V4M2 21v-11h10v11M15 4v17" /><path d="M14 9h3" strokeWidth="3" /></g>,
  },
  {
    name: "Edge",
    art: (
      <g>
        <path d="M0 11a12 12 0 0 1 24 1q0 5-6 5l-4-2q2-7-5-6-6 0-7 6z" fill="#38bde0" />
        <path d="M12 0q12 0 12 12 0 5-6 5l-4-2q3-6-3-10z" fill="#5ad06c" opacity=".85" />
        <path d="M0 12q3-6 9-4-4 6 1 12H4z" fill="#1474c4" />
      </g>
    ),
  },
  {
    name: "File Explorer",
    art: <g><path d="M1 3h9l2 3H1z" fill="#e0a21c" /><path d="M1 5h21v15H1z" fill="#fbd667" /><path d="M5 12h14v8H5z" fill="#3f8fd0" /></g>,
  },
  {
    name: "Slack",
    art: (
      <g>
        <circle cx="12" cy="12" r="11.500" fill="#fff" />
        <path d="M9 4a1.500 1.500 0 0 1 2 1v2H9zM4 9h7v3H5z" fill="#36c5f0" />
        <path d="M13 4h2.500v8H13zM16 9h3v3h-3z" fill="#2eb67d" />
        <path d="M4 14h7v3H4z" fill="#e01e5a" />
        <path d="M13 14h7v3h-7z" fill="#ecb22e" />
      </g>
    ),
  },
  {
    name: "Resource Monitor",
    art: (
      <g>
        <path d="m2 8 5-4 3 2v13H2z" fill="#d5d2cc" />
        <path d="M7 4 23 2v18H6z" fill="#f4f4f0" stroke="#b6b6b0" />
        <path d="m8 13 3-5 3 6 3-7 2 5h3" stroke="#6f9ec0" fill="none" />
      </g>
    ),
  },
  {
    name: "Outlook",
    art: (
      <g>
        <path d="M9 1h14v12H9z" fill="#1f8ede" />
        <path d="M16 1h7v6h-7z" fill="#48c4f0" />
        <path d="M8 13h16v8H8z" fill="#1066b8" />
        <rect y="6" width="13" height="13" rx="1" fill="#0a64b4" />
        <circle cx="6.500" cy="12" r="3" fill="none" stroke="#fff" strokeWidth="2" />
      </g>
    ),
  },
  {
    name: "Teams",
    art: (
      <g>
        <circle cx="13" cy="4" r="4" fill="#7b83eb" />
        <circle cx="20" cy="5" r="3" fill="#5059c9" />
        <path d="M10 9h14v12H10z" fill="#6068d4" />
        <rect y="6" width="13" height="13" rx="1" fill="#4048b0" />
        <path d="M3.500 9h6v1.500H7.500V17h-2v-6.500h-2z" fill="#fff" />
      </g>
    ),
  },
];

const Taskbar = () => (
  <footer className="mt-auto flex h-[22px] items-start overflow-hidden bg-linear-to-r from-[#233943] via-[#20353f] to-[#1a2742]">
    {tasks.map((task) => (
      <button
        key={task.name}
        aria-label={task.name}
        className={`flex h-10 w-[49px] shrink-0 items-center justify-center ${
          task.name === "Edge" ? "border-r-4 border-[#414f57] bg-[#4c5e66]" : ""
        }`}
      >
        <svg width="24" height="24" viewBox="0 0 24 24">
          {task.art}
        </svg>
      </button>
    ))}
    <span className="ml-auto pr-[11px] font-['Open_Sans','Noto_Sans',sans-serif] text-[12px] leading-[22px] text-white">1:59 PM</span>
  </footer>
);

const App = () => (
  <div className="flex min-h-screen flex-col bg-white">
    <BrowserBar />
    <div className="flex h-[461px] justify-between">
      <div className="flex shrink-0">
        <SideRail />
        <SpritePanel />
      </div>
      <MapPanel />
    </div>
    <Taskbar />
  </div>
);

export default App;
